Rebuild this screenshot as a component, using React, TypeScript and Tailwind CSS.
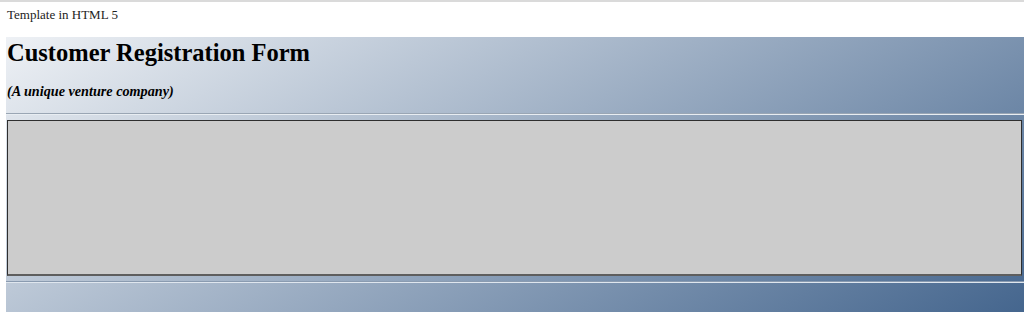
export default function App() {
  return (
    <div className="w-[1024px] h-[312px] overflow-hidden bg-white" style={{ fontFamily: '"Liberation Serif", "Times New Roman", serif' }}>
      {/* top edge */}
      <div className="h-[2px] bg-[#dadada]" />
      <div className="h-[35px] pl-[7px] pt-[5px] text-[13px] leading-[16px] text-[#222]">Template in HTML 5</div>

      {/* header + form area */}
      <div className="ml-[6px] h-[275px] bg-linear-[150deg] from-[#eef1f5] to-[#45668e]">
        <h1 className="pt-[2px] pl-[1px] text-[24.5px] leading-[28px] font-bold text-black">Customer Registration Form</h1>
        <p className="mt-[16px] pl-[1px] text-[14.2px] leading-[17px] font-bold italic text-black">(A unique venture company)</p>
        <div className="mt-[13px] border-t border-[#9aa6b4] border-b border-b-[#e8edf2]" />
        <div className="mt-[5px] ml-[1px] mr-[2px] h-[156px] bg-[#cccccc] border border-[#2e2e2e] border-b-2 border-b-[#5e5e5e]" />
        <div className="mt-[5px] border-t border-[#8a9bb0] border-b border-b-[#dfe6ee]" />
      </div>
    </div>
  );
}
